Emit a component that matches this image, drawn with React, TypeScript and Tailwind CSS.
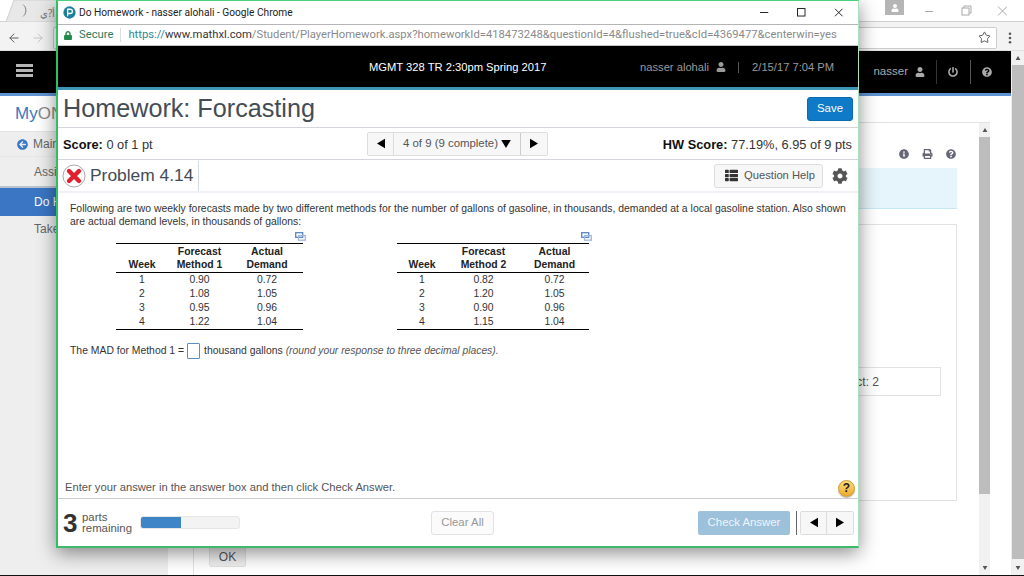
import React from "react";
import { FaUser, FaPowerOff, FaQuestionCircle, FaInfoCircle, FaPrint, FaCog, FaThList, FaLock, FaArrowCircleLeft } from "react-icons/fa";
import { ArrowLeft, ArrowRight, Star } from "lucide-react";

function Tri({ dir, className = "" }: { dir: "left" | "right" | "down" | "up"; className?: string }) {
  const pts = { left: "10,0 10,12 0,6", right: "0,0 0,12 10,6", down: "0,0 12,0 6,10", up: "0,10 12,10 6,0" }[dir];
  const box = dir === "left" || dir === "right" ? "0 0 10 12" : "0 0 12 10";
  return (
    <svg viewBox={box} className={className} fill="currentColor">
      <polygon points={pts} />
    </svg>
  );
}

function CopyIcon() {
  return (
    <svg viewBox="0 0 11 9" className="w-[11px] h-[9px]" fill="none" stroke="#5b86c4" strokeWidth="1.3">
      <rect x="0.7" y="0.7" width="7" height="4.6" />
      <rect x="3.5" y="3.6" width="6.8" height="4.6" stroke="#9fb8de" />
    </svg>
  );
}

function DataTable({ method, widths, rows }: { method: string; widths: number[]; rows: string[][] }) {
  return (
    <div>
      <div className="flex justify-end h-[12px] -mr-[3px] items-end pb-[2px]">
        <CopyIcon />
      </div>
      <table className="border-t border-b border-black text-[10.4px] leading-[14px] text-[#333]" style={{ width: widths.reduce((a, b) => a + b, 0) }}>
        <thead>
          <tr className="border-b border-black font-bold text-[#222] align-bottom">
            <th style={{ width: widths[0] }} className="font-bold leading-[13px] pb-[1px]">Week</th>
            <th style={{ width: widths[1] }} className="font-bold leading-[13px] pt-[1px] pb-[1px]">Forecast<br />Method {method}</th>
            <th style={{ width: widths[2] }} className="font-bold leading-[13px] pt-[1px] pb-[1px]">Actual<br />Demand</th>
          </tr>
        </thead>
        <tbody>
          {rows.map((r) => (
            <tr key={r[0]}>
              <td className="text-center">{r[0]}</td>
              <td className="text-center">{r[1]}</td>
              <td className="text-center">{r[2]}</td>
            </tr>
          ))}
        </tbody>
      </table>
    </div>
  );
}

function NavBtn({ dir, className = "" }: { dir: "left" | "right"; className?: string }) {
  return (
    <div className={`flex items-center justify-center bg-[#f7f7f7] ${className}`}>
      <Tri dir={dir} className="w-[8px] h-[11px] text-black" />
    </div>
  );
}

function Popup() {
  return (
    <div className="absolute left-[56px] top-0 w-[803px] h-[548px] bg-white flex flex-col border-l-2 border-b-2 border-t border-r border-t-[#4cd07d] border-l-[#2fbf66] border-b-[#3fb96b] border-r-[#a9e2bf] shadow-[0_5px_18px_rgba(0,0,0,0.45)]">
      {/* title bar */}
      <div className="h-[24px] shrink-0 flex items-center pl-[5px] relative border-b border-[#b5b5b5]">
        <svg viewBox="0 0 14 14" className="w-[13px] h-[13px] mr-[3px] shrink-0">
          <circle cx="7" cy="7" r="6.6" fill="#1b7f9e" />
          <path d="M5 11V3.5h2.8a2.2 2.2 0 0 1 0 4.6H5" fill="none" stroke="#fff" strokeWidth="1.4" />
        </svg>
        <span className="font-['Roboto'] text-[10.2px] text-[#222]">Do Homework - nasser alohali - Google Chrome</span>
        <div className="ml-auto flex items-center">
          <svg viewBox="0 0 120 12" className="w-[90px] h-[9px] mr-[8px]" fill="none" stroke="#222" strokeWidth="1.3">
            <path d="M0 6h11" />
            <rect x="50" y="0.7" width="10" height="10" />
            <path d="M100 1l10 10M110 1l-10 10" />
          </svg>
        </div>
      </div>
      {/* url bar */}
      <div className="h-[21px] shrink-0 flex items-center pl-[6px] font-['Roboto'] text-[11.25px] whitespace-nowrap overflow-hidden border-b border-[#c4c4c4]">
        <FaLock className="w-[8px] h-[9px] shrink-0 text-[#1f8a4c] mr-[7px]" />
        <span className="text-[#2f7a5a]">Secure</span>
        <span className="w-px h-[14px] bg-[#ddd] mx-[7px] shrink-0" />
        <span className="text-[#2a8a97]">https://</span>
        <span className="text-[#333]">www.mathxl.com</span>
        <span className="text-[#8a8a8a]">/Student/PlayerHomework.aspx?homeworkId=418473248&amp;questionId=4&amp;flushed=true&amp;cId=4369477&amp;centerwin=yes</span>
      </div>
      {/* black header */}
      <div className="h-[44px] shrink-0 bg-black border-b-[3px] border-[#3f97b8] flex items-center text-[11.2px] pt-[1px]">
        <span className="ml-[311px] text-white w-[271px]">MGMT 328 TR 2:30pm Spring 2017</span>
        <span className="text-[#9a9a9a]">nasser alohali</span>
        <FaUser className="w-[10px] h-[10px] text-[#9a9a9a] ml-[7px]" />
        <span className="w-px h-[11px] bg-[#555] mx-[12px]" />
        <span className="text-[#9a9a9a] ml-[1px]">2/15/17 7:04 PM</span>
      </div>
      {/* heading */}
      <div className="h-[38px] shrink-0 flex items-center justify-between pl-[5px] pr-[5px] border-b border-[#d5d5e0]">
        <span className="text-[25.2px] text-[#444c55] leading-none">Homework: Forcasting</span>
        <button className="w-[46px] h-[24px] bg-[#0f7ac8] border border-[#0c6ab0] rounded-[3px] text-white text-[11.4px]">Save</button>
      </div>
      {/* score */}
      <div className="h-[32px] shrink-0 flex items-center pl-[5px] pr-[6px] border-b border-[#d5d5e0] text-[12.8px] text-[#333]">
        <span className="w-[304px] mt-[2px]"><b className="text-[#111]">Score:</b> 0 of 1 pt</span>
        <div className="flex h-[24px] w-[181px] border border-[#ddd] rounded-[2px] bg-[#f7f7f7]">
          <NavBtn dir="left" className="w-[26px] border-r border-[#ddd]" />
          <div className="w-[127px] flex items-center justify-center text-[#555] text-[11.4px] gap-[3px] border-r border-[#ccc]">
            4 of 9 (9 complete)
            <Tri dir="down" className="w-[10px] h-[8px] text-black" />
          </div>
          <NavBtn dir="right" className="w-[26px]" />
        </div>
        <span className="ml-auto mt-[2px]"><b className="text-[#111]">HW Score:</b> 77.19%, 6.95 of 9 pts</span>
      </div>
      {/* problem */}
      <div className="h-[33px] shrink-0 flex items-center pl-[4px] border-b-2 border-[#f0f0f6]">
        <svg viewBox="0 0 24 24" className="w-[24px] h-[24px] shrink-0">
          <circle cx="12" cy="12" r="11" fill="#fff" stroke="#a8a8a8" strokeWidth="1" />
          <path d="M7 7l10 10M17 7L7 17" stroke="#e0202c" strokeWidth="4.4" strokeLinecap="round" />
        </svg>
        <span className="ml-[4px] text-[17.4px] text-[#444c55] w-[108px]">Problem 4.14</span>
        <span className="w-px h-[30px] bg-[#d5dbe2]" />
        <button className="ml-auto w-[109px] h-[24px] flex items-center justify-center gap-[3px] bg-[#f7f7f7] border border-[#ddd] rounded-[3px] text-[11.2px] text-[#555]">
          <FaThList className="w-[19px] h-[13px] text-[#333]" />
          Question Help
        </button>
        <FaCog className="w-[16px] h-[16px] text-[#555] ml-[9px] mr-[10px]" />
      </div>
      {/* body */}
      <div className="flex-1 relative pl-[12px] pr-[6px] pt-[9px] text-[10.4px] leading-[13px] text-[#333]">
        <p className="tracking-[0.012px]">
          Following are two weekly forecasts made by two different methods for the number of gallons of gasoline, in thousands, demanded at a local gasoline station. Also shown
          are actual demand levels, in thousands of gallons:
        </p>
        <div className="flex mt-[3px] ml-[46px] gap-[94px]">
          <DataTable method="1" widths={[52, 63, 72]} rows={[["1", "0.90", "0.72"], ["2", "1.08", "1.05"], ["3", "0.95", "0.96"], ["4", "1.22", "1.04"]]} />
          <DataTable method="2" widths={[50, 73, 69]} rows={[["1", "0.82", "0.72"], ["2", "1.20", "1.05"], ["3", "0.90", "0.96"], ["4", "1.15", "1.04"]]} />
        </div>
        <div className="flex items-center mt-[12px] h-[17px] whitespace-nowrap">
          <span>The MAD for Method 1 =</span>
          <span className="w-[13px] h-[16px] border border-[#5b8fc7] rounded-[1px] ml-[3px] mr-[4px]" />
          <span>thousand gallons</span>
          <i className="ml-[3px] text-[#555] text-[10.3px]">(round your response to three decimal places).</i>
        </div>
        <div className="absolute left-[7px] right-0 bottom-[1px] flex items-start justify-between pr-[3px] text-[#555]">
          <span className="text-[11.2px] mt-[1px]">Enter your answer in the answer box and then click Check Answer.</span>
          <span className="w-[17px] h-[17px] rounded-full bg-gradient-to-b from-[#fbdc75] to-[#eda92c] border border-[#c99a36] flex items-center justify-center text-[12px] font-bold text-[#222] shadow-[0_1px_1px_rgba(0,0,0,0.3)]">?</span>
        </div>
      </div>
      {/* footer */}
      <div className="h-[48px] shrink-0 border-t border-[#cfccd8] flex items-center pl-[5px] relative">
        <span className="text-[26px] font-bold text-[#333] leading-none w-[19px]">3</span>
        <span className="text-[11.4px] leading-[11px] text-[#555] w-[58px]">parts<br />remaining</span>
        <div className="w-[100px] h-[13px] rounded-[3px] bg-[#f3f3f3] border border-[#e6e6e6] overflow-hidden">
          <div className="w-[40px] h-full bg-[#3d85c6]" />
        </div>
        <button className="ml-[191px] w-[63px] h-[24px] border border-[#e2e2e2] rounded-[3px] bg-[#fbfbfb] text-[#999] text-[11.4px]">Clear All</button>
        <button className="ml-[204px] w-[92px] h-[24px] bg-[#9dc0db] rounded-[2px] text-[#eef5fa] text-[11.4px]">Check Answer</button>
        <span className="w-px h-[24px] bg-[#666] ml-[6px]" />
        <div className="flex h-[24px] w-[54px] ml-[3px] border border-[#ddd] rounded-[2px] bg-[#f7f7f7]">
          <NavBtn dir="left" className="w-[26px] border-r border-[#ddd]" />
          <NavBtn dir="right" className="w-[26px]" />
        </div>
      </div>
    </div>
  );
}

function Scrollbar({ thumbClass }: { thumbClass: string }) {
  return (
    <div className="h-full flex flex-col items-stretch bg-[#f1f1f1]">
      <div className="h-[14px] shrink-0 flex items-center justify-center">
        <Tri dir="up" className="w-[6px] h-[4px] text-[#555]" />
      </div>
      <div className={`bg-[#bdbdbd] ${thumbClass}`} />
      <div className="flex-1" />
      <div className="h-[14px] shrink-0 flex items-center justify-center">
        <Tri dir="down" className="w-[6px] h-[4px] text-[#555]" />
      </div>
    </div>
  );
}

export default function App() {
  return (
    <div className="relative w-[1024px] h-[576px] overflow-hidden bg-white flex flex-col font-['Liberation_Sans',Arial,sans-serif]">
      {/* tab strip */}
      <div className="h-[22px] shrink-0 relative flex items-start bg-white border-b border-[#d0d0d0]">
        <svg viewBox="0 0 60 22" className="w-[60px] h-[22px] shrink-0">
          <polygon points="6,22 14,0 60,0 60,22" fill="#e8e8e8" stroke="#cfcfcf" />
          <path d="M22 4a7 7 0 0 1 0 13a8 8 0 0 0 0-13z" fill="#888" />
        </svg>
        <span className="absolute left-[40px] top-[6px] text-[10px] text-[#777] font-['Noto_Sans',sans-serif]">ﺃ?ي</span>
        <div className="ml-auto flex items-start">
          <span className="w-[19px] h-[15px] bg-[#b5b5b5] flex items-center justify-center mr-[21px]">
            <FaUser className="w-[8px] h-[8px] text-white" />
          </span>
          <svg viewBox="0 0 82 12" className="w-[82px] h-[12px] mt-[5px] mr-[17px]" fill="none" stroke="#a8a8a8" strokeWidth="1">
            <path d="M0 6.5h8" />
            <rect x="37" y="3" width="7" height="7" />
            <path d="M39 3V1h7v7h-2" />
            <path d="M73 1.5l9 9M82 1.5l-9 9" />
          </svg>
        </div>
      </div>
      {/* toolbar */}
      <div className="h-[29px] shrink-0 bg-[#f3f3f3] flex items-center pl-[7px] pt-[3px] border-b border-[#e0e0e0]">
        <ArrowLeft className="w-[14px] h-[14px] text-[#555]" strokeWidth={1.6} />
        <ArrowRight className="w-[14px] h-[14px] text-[#c4c4c4] ml-[10px]" strokeWidth={1.6} />
        <div className="ml-[8px] w-[944px] h-[22px] bg-white border border-[#ccc] rounded-[2px] flex items-center justify-end pr-[5px]">
          <Star className="w-[13px] h-[13px] text-[#444]" strokeWidth={1.6} />
        </div>
        <svg viewBox="0 0 4 14" className="w-[4px] h-[12px] ml-[11px]" fill="#555">
          <circle cx="2" cy="2" r="1.5" />
          <circle cx="2" cy="7" r="1.5" />
          <circle cx="2" cy="12" r="1.5" />
        </svg>
      </div>
      {/* main area with outer scrollbar */}
      <div className="flex-1 flex min-h-0">
        <div className="flex-1 min-w-0 flex flex-col">
          {/* nav */}
          <div className="h-[45px] shrink-0 bg-black border-b-[3px] border-[#5f92d0] flex items-center pl-[16px] text-[11.5px] text-[#aaa]">
            <div className="w-[17px] flex flex-col gap-[2px] mb-[3px]">
              <span className="h-[3px] bg-[#b5b5b5]" />
              <span className="h-[3px] bg-[#b5b5b5]" />
              <span className="h-[3px] bg-[#b5b5b5]" />
            </div>
            <div className="ml-auto flex items-center">
              <span>nasser</span>
              <FaUser className="w-[10px] h-[10px] ml-[7px] text-[#aaa]" />
              <span className="w-px h-[24px] bg-[#333] ml-[11px]" />
              <FaPowerOff className="w-[10px] h-[10px] ml-[11px] text-[#aaa]" />
              <span className="w-px h-[24px] bg-[#555] ml-[12px]" />
              <FaQuestionCircle className="w-[10px] h-[10px] ml-[11px] mr-[19px] text-[#aaa]" />
            </div>
          </div>
          <div className="flex-1 flex min-h-0">
            {/* sidebar */}
            <div className="w-[168px] shrink-0 bg-[#eeeeee] text-[12px] text-[#666] flex flex-col">
              <div className="h-[36px] bg-white pl-[15px] flex items-center text-[17px] leading-none border-b border-[#e4e4e4]">
                <span className="text-[#3a78c2]">My</span><span className="text-[#8a8a8a]">ON</span>
              </div>
              <div className="h-[25px] flex items-center pl-[17px] gap-[5px] border-b border-[#e6e6e6]">
                <FaArrowCircleLeft className="w-[11px] h-[11px] text-[#3a78c2]" />Main
              </div>
              <div className="h-[31px] flex items-center pl-[34px] border-b-2 border-[#b9c3cf]">Assignments</div>
              <div className="h-[28px] flex items-center pl-[34px] bg-[#3a76c4] text-white">Do Homework</div>
              <div className="h-[26px] flex items-center pl-[34px]">Take a Test</div>
            </div>
            {/* content */}
            <div className="flex-1 min-w-0 pl-[25px] pt-[26px] pr-[21px] flex flex-col">
              <div className="flex-1 min-h-0 flex border-l border-t border-[#e2e2e2]">
                <div className="flex-1 min-w-0 pr-[22px] flex flex-col">
                  <div className="h-[45px] shrink-0 flex items-center justify-end gap-[13px] pr-[1px] pt-[17px] text-[#667]">
                    <FaInfoCircle className="w-[10px] h-[10px]" />
                    <FaPrint className="w-[11px] h-[10px]" />
                    <FaQuestionCircle className="w-[10px] h-[10px]" />
                  </div>
                  <div className="h-[41px] shrink-0 bg-[#e6f5fb] border-b border-[#c5e8f2]" />
                  <div className="h-[277px] shrink-0 mt-[15px] border border-[#e2e2e2] pt-[142px] pr-[15px] pl-[15px]">
                    <div className="h-[29px] border border-[#e2e2e2] flex items-center justify-end pr-[61px] text-[12px] text-[#555]">ct: 2</div>
                  </div>
                  <button className="mt-[45px] ml-[15px] w-[37px] h-[21px] shrink-0 bg-[#eee] border border-[#e2e2e2] rounded-[2px] text-[12px] text-[#555]">OK</button>
                </div>
                <div className="w-[11px] shrink-0">
                  <Scrollbar thumbClass="h-[357px]" />
                </div>
              </div>
            </div>
          </div>
        </div>
        <div className="w-[13px] shrink-0 border-l border-[#eee]">
          <Scrollbar thumbClass="h-[494px]" />
        </div>
      </div>
      <div className="h-[1px] shrink-0 bg-[#111]" />
      <Popup />
    </div>
  );
}
